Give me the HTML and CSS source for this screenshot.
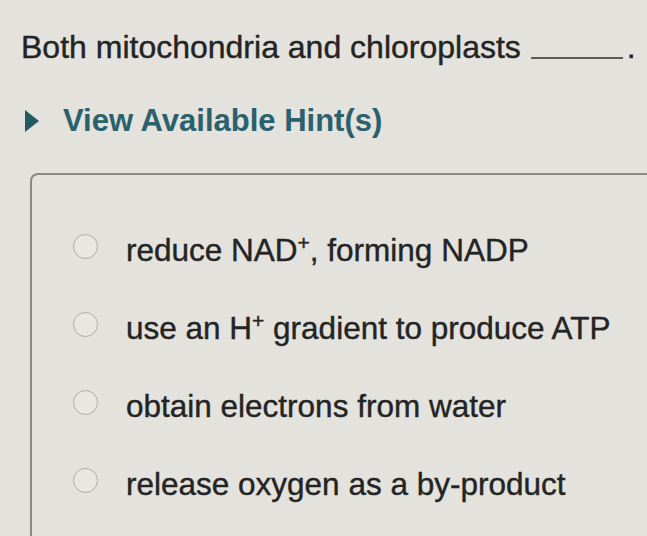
FILE: index.html
```html
<!DOCTYPE html>
<html lang="en">
<head>
<meta charset="utf-8">
<title>Question</title>
<link rel="stylesheet" href="styles.css">
</head>
<body>
<div class="page">
  <p class="question">Both mitochondria and chloroplasts<span class="blank"></span><span class="dot">.</span></p>
  <div class="hint">
    <span class="caret"></span>
    <span class="hint-text">View Available Hint(s)</span>
  </div>
  <div class="box">
    <ul class="options">
      <li class="option"><span class="radio"></span><span class="label">reduce NAD<sup class="sup">+</sup>, forming NADP</span></li>
      <li class="option"><span class="radio"></span><span class="label">use an H<sup class="sup">+</sup> gradient to produce ATP</span></li>
      <li class="option"><span class="radio"></span><span class="label">obtain electrons from water</span></li>
      <li class="option"><span class="radio"></span><span class="label">release oxygen as a by-product</span></li>
    </ul>
  </div>
</div>
</body>
</html>
```
FILE: styles.css
```css
html, body {
  margin: 0;
  padding: 0;
  background: #e3e2dc;
  height: 100%;
  overflow: hidden;
}
.page {
  display: flex;
  flex-direction: column;
  height: 536px;
  font-family: "Liberation Sans", Arial, sans-serif;
  color: #242424;
}
.question {
  margin: 29px 0 0 21px;
  font-size: 32px;
  line-height: 36.8px;
  white-space: nowrap;
  -webkit-text-stroke: 0.4px #242424;
}
.blank {
  display: inline-block;
  width: 92px;
  height: 0;
  border-bottom: 2px solid #5a5a58;
  margin-left: 10px;
  vertical-align: baseline;
  position: relative;
  top: 1px;
}
.dot {
  margin-left: 4px;
}
.hint {
  display: flex;
  align-items: center;
  margin: 37px 0 0 25px;
  height: 36px;
}
.caret {
  width: 0;
  height: 0;
  border-left: 14px solid #245862;
  border-top: 11px solid transparent;
  border-bottom: 11px solid transparent;
}
.hint-text {
  margin-left: 24px;
  font-size: 31px;
  font-weight: bold;
  line-height: 36px;
  color: #2a616c;
}
.box {
  flex: 1;
  margin: 34px 0 0 30px;
  border-top: 2px solid #8a8a87;
  border-left: 2px solid #8a8a87;
  border-top-left-radius: 8px;
}
.options {
  list-style: none;
  margin: 0;
  padding: 57px 0 0 41px;
  display: flex;
  flex-direction: column;
  gap: 42px;
}
.option {
  display: flex;
  align-items: flex-start;
  height: 36px;
}
.radio {
  flex: none;
  width: 23px;
  height: 23px;
  margin-top: 2px;
  border: 1.5px solid #adada8;
  border-radius: 50%;
  background: #e8e7e2;
}
.label {
  margin-left: 28px;
  font-size: 31.5px;
  line-height: 36px;
  white-space: nowrap;
  -webkit-text-stroke: 0.4px #242424;
}
.sup {
  font-size: 21px;
  line-height: 0;
  vertical-align: 11px;
}
```
